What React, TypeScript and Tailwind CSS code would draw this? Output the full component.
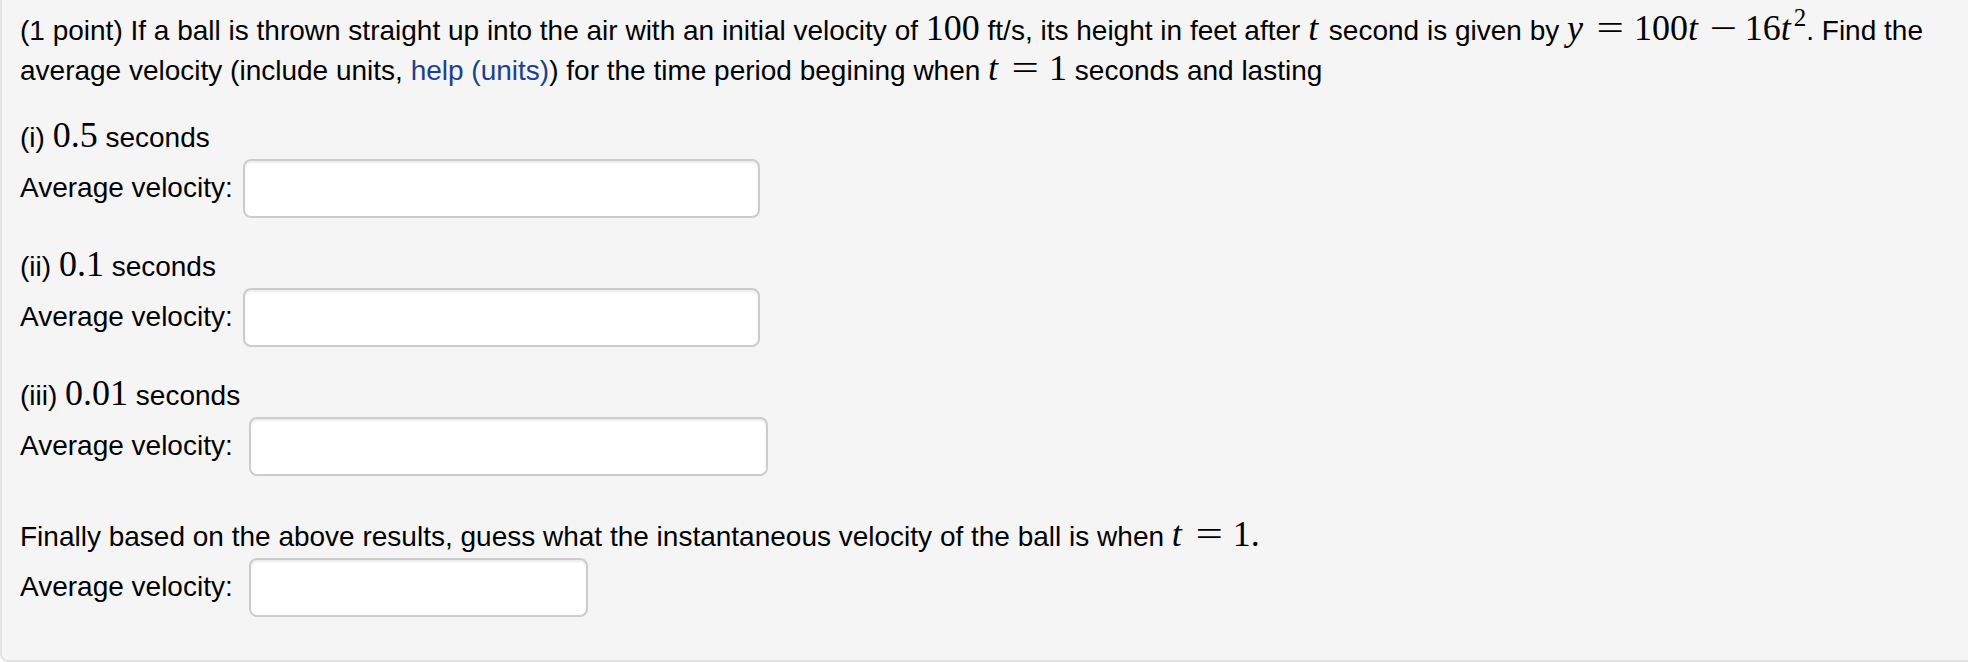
import React from 'react';

// MathJax-style inline math, rendered with a serif face
const M = ({ children }: { children: React.ReactNode }) => (
    <span className="font-['Liberation_Serif',serif] text-[36px] leading-[0]">{children}</span>
);

// italic variable, with a little italic correction
const V = ({ children }: { children: React.ReactNode }) => <i className="mr-[0.08em]">{children}</i>;

// relation / binary operator: glyph stretched to the wider TeX shape
const Rel = ({ children }: { children: React.ReactNode }) => (
    <span className="inline-block mx-[0.385em] scale-x-[1.35]">{children}</span>
);

const Bin = ({ children }: { children: React.ReactNode }) => (
    <span className="inline-block mx-[0.33em] scale-x-[1.35]">{children}</span>
);

const AnswerRow = ({ width, gap }: { width: string; gap: string }) => (
    <div className={`flex items-center h-[60px] ${gap}`}>
        <span>Average velocity:</span>
        <input
            type="text"
            className={`${width} h-[59px] bg-white border-2 border-[#cccccc] rounded-[8px] shadow-[inset_0_2px_2px_rgba(0,0,0,0.075)] outline-none px-3`}
        />
    </div>
);

export default function App() {
    return (
        <div className="w-full min-h-[662px] bg-white text-black font-['Liberation_Sans',Arial,sans-serif]">
            <div className="h-[662px] bg-[#f5f5f5] border-l-2 border-b-2 border-[#e3e3e3] rounded-bl-[8px] pl-[18px] pt-[11px] text-[28px] leading-[40px]">
                {/* Problem statement */}
                <p className="whitespace-nowrap">
                    (1 point) If a ball is thrown straight up into the air with an initial velocity of{' '}
                    <M>100</M> ft/s, its height in feet after <M><V>t</V></M> second is given by{' '}
                    <M>
                        <V>y</V>
                        <Rel>=</Rel>100<V>t</V>
                        <Bin>−</Bin>16<V>t</V>
                        <sup className="text-[25px] -top-[14px]">2</sup>
                    </M>
                    . Find the
                    <br />
                    average velocity (include units,{' '}
                    <a href="#" className="text-[#1d3f8f]">help (units)</a>) for the time period begining when{' '}
                    <M>
                        <V>t</V>
                        <Rel>=</Rel>1
                    </M>{' '}
                    seconds and lasting
                </p>

                {/* (i) */}
                <div className="mt-[27px]">
                    (i) <M>0.5</M> seconds
                </div>
                <AnswerRow width="w-[517px]" gap="gap-[10px]" />

                {/* (ii) */}
                <div className="mt-[29px]">
                    (ii) <M>0.1</M> seconds
                </div>
                <AnswerRow width="w-[517px]" gap="gap-[10px]" />

                {/* (iii) */}
                <div className="mt-[29px]">
                    (iii) <M>0.01</M> seconds
                </div>
                <AnswerRow width="w-[519px]" gap="gap-[16px]" />

                {/* final guess */}
                <div className="mt-[41px] whitespace-nowrap">
                    Finally based on the above results, guess what the instantaneous velocity of the ball is when{' '}
                    <M>
                        <V>t</V>
                        <Rel>=</Rel>1.
                    </M>
                </div>
                <AnswerRow width="w-[339px]" gap="gap-[16px]" />
            </div>
        </div>
    );
}
